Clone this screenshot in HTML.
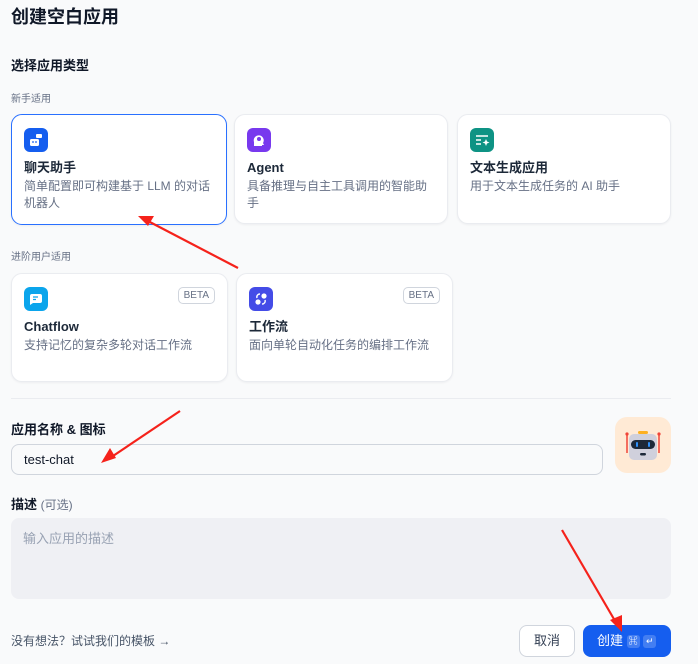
<!DOCTYPE html>
<html><head><meta charset="utf-8"><style>
*{box-sizing:border-box;margin:0;padding:0}
body{width:698px;height:664px;background:#f9fafb;font-family:"Liberation Sans","Noto Sans CJK SC",sans-serif;position:relative;overflow:hidden;color:#101828}
.a{position:absolute}
.card{position:absolute;background:#fff;border:1px solid #eaecf0;border-radius:11px;box-shadow:0 1px 2px rgba(16,24,40,.05)}
.ic{position:absolute;left:12px;top:13px;width:24px;height:24px;border-radius:6px}
.t{position:absolute;left:12px;top:44px;font-size:13px;font-weight:bold;color:#1d2939;line-height:18px}
.d{position:absolute;left:12px;top:63px;font-size:12px;color:#667085;line-height:17px;width:182px}
.beta{position:absolute;right:12px;top:13px;font-size:10px;color:#667085;border:1px solid #d0d5dd;border-radius:5px;padding:2px 5px}
.lab{font-size:10px;color:#667085}
</style></head><body>
<div class="a" style="left:11px;top:3px;font-size:18px;font-weight:bold">创建空白应用</div>
<div class="a" style="left:11px;top:55px;font-size:13px;font-weight:bold">选择应用类型</div>
<div class="a lab" style="left:11px;top:90px">新手适用</div>
<div class="card" style="left:11px;top:114px;width:216px;height:111px;border:1.5px solid #2970ff">
 <div class="ic" style="background:#155eef"><svg width="24" height="24"><rect x="6" y="11" width="9" height="7" rx="1.5" fill="#fff"/><rect x="12" y="6" width="6" height="4" rx="1" fill="#fff"/><circle cx="9" cy="14" r=".9" fill="#155eef"/><circle cx="12" cy="14" r=".9" fill="#155eef"/></svg></div>
 <div class="t">聊天助手</div><div class="d" style="width:192px">简单配置即可构建基于 LLM 的对话机器人</div></div>
<div class="card" style="left:234px;top:114px;width:214px;height:110px">
 <div class="ic" style="background:#7839ee"><svg width="24" height="24"><path d="M7 18v-4a5 5 0 1 1 9 1l1 2h-2v1z" fill="#fff"/><circle cx="12" cy="11" r="2" fill="#7839ee"/></svg></div>
 <div class="t">Agent</div><div class="d">具备推理与自主工具调用的智能助手</div></div>
<div class="card" style="left:457px;top:114px;width:214px;height:110px">
 <div class="ic" style="background:#0e9384"><svg width="24" height="24"><path d="M6 8h12M6 12h5M6 16h5" stroke="#fff" stroke-width="1.6"/><path d="M16 11l1 2.5 2.5 1-2.5 1-1 2.5-1-2.5-2.5-1 2.5-1z" fill="#fff"/></svg></div>
 <div class="t">文本生成应用</div><div class="d">用于文本生成任务的 AI 助手</div></div>
<div class="a lab" style="left:11px;top:248px">进阶用户适用</div>
<div class="card" style="left:11px;top:273px;width:217px;height:109px">
 <div class="ic" style="background:#0ba5ec"><svg width="24" height="24"><path d="M6 9a2 2 0 0 1 2-2h8a2 2 0 0 1 2 2v5a2 2 0 0 1-2 2H9l-3 2z" fill="#fff"/><path d="M9 10h5M9 12.5h3" stroke="#0ba5ec" stroke-width="1.2"/></svg></div>
 <span class="beta">BETA</span>
 <div class="t">Chatflow</div><div class="d" style="width:192px">支持记忆的复杂多轮对话工作流</div></div>
<div class="card" style="left:236px;top:273px;width:217px;height:109px">
 <div class="ic" style="background:#444ce7"><svg width="24" height="24"><circle cx="9" cy="15" r="2.6" fill="#fff"/><circle cx="15" cy="9" r="2.6" fill="#fff"/><path d="M8 11a3 3 0 0 1 3-4M16 13a3 3 0 0 1-3 4" stroke="#fff" stroke-width="1.4" fill="none"/></svg></div>
 <span class="beta">BETA</span>
 <div class="t">工作流</div><div class="d" style="width:192px">面向单轮自动化任务的编排工作流</div></div>
<div class="a" style="left:11px;top:398px;width:660px;height:1px;background:#eaecf0"></div>
<div class="a" style="left:11px;top:419px;font-size:13px;font-weight:bold">应用名称 &amp; 图标</div>
<div class="a" style="left:11px;top:444px;width:592px;height:31px;border:1px solid #d0d5dd;border-radius:8px;background:#f9fafb;font-size:13px;padding:7px 12px">test-chat</div>
<div class="a" style="left:615px;top:417px;width:56px;height:56px;border-radius:12px;background:#ffead5">
 <svg width="56" height="56"><path d="M12 18v18M44 18v18" stroke="#f04438" stroke-width="1.5"/><circle cx="12" cy="17" r="1.6" fill="#f04438"/><circle cx="44" cy="17" r="1.6" fill="#f04438"/><rect x="23" y="14" width="10" height="3" rx="1.5" fill="#fdb022"/><rect x="14" y="17" width="28" height="26" rx="5" fill="#d0d0dc"/><rect x="16" y="23" width="24" height="9" rx="4.5" fill="#1d2939"/><rect x="21" y="25" width="2" height="5" rx="1" fill="#2e90fa"/><rect x="33" y="25" width="2" height="5" rx="1" fill="#2e90fa"/><rect x="25" y="36" width="6" height="2.5" rx="1.2" fill="#1d2939"/></svg></div>
<div class="a" style="left:11px;top:494px;font-size:13px;font-weight:bold">描述 <span style="font-weight:normal;font-size:12px;color:#667085">(可选)</span></div>
<div class="a" style="left:11px;top:518px;width:660px;height:81px;border-radius:8px;background:#eff0f4;font-size:13px;color:#98a2b3;padding:10px 12px">输入应用的描述</div>
<div class="a" style="left:11px;top:632px;font-size:12px;color:#475467">没有想法？试试我们的模板 →</div>
<div class="a" style="left:519px;top:625px;width:56px;height:32px;border:1px solid #d0d5dd;border-radius:8px;background:#fff;font-size:13px;color:#344054;text-align:center;line-height:30px">取消</div>
<div class="a" style="left:583px;top:625px;width:88px;height:32px;border-radius:8px;background:#155eef;font-size:13px;color:#fff;padding-left:14px;line-height:32px">创建 <span style="display:inline-block;width:13px;height:13px;background:rgba(255,255,255,.2);border-radius:3px;font-size:9px;line-height:13px;text-align:center;vertical-align:1px">⌘</span> <span style="display:inline-block;width:13px;height:13px;background:rgba(255,255,255,.2);border-radius:3px;font-size:9px;line-height:13px;text-align:center;vertical-align:1px">↵</span></div>
<svg class="a" style="left:0;top:0" width="698" height="664">
<g stroke="#f5221b" stroke-width="2.2" fill="#f5221b">
<path d="M238 268L146 220"/><path d="M180 411L110 458"/><path d="M562 530L618 626"/></g>
<path d="M138 216l16 0-6 10z" fill="#f5221b"/>
<path d="M101 463l9-15 6 10z" fill="#f5221b"/>
<path d="M622 632l-12-12 12-5z" fill="#f5221b"/>
</svg>
</body></html>
